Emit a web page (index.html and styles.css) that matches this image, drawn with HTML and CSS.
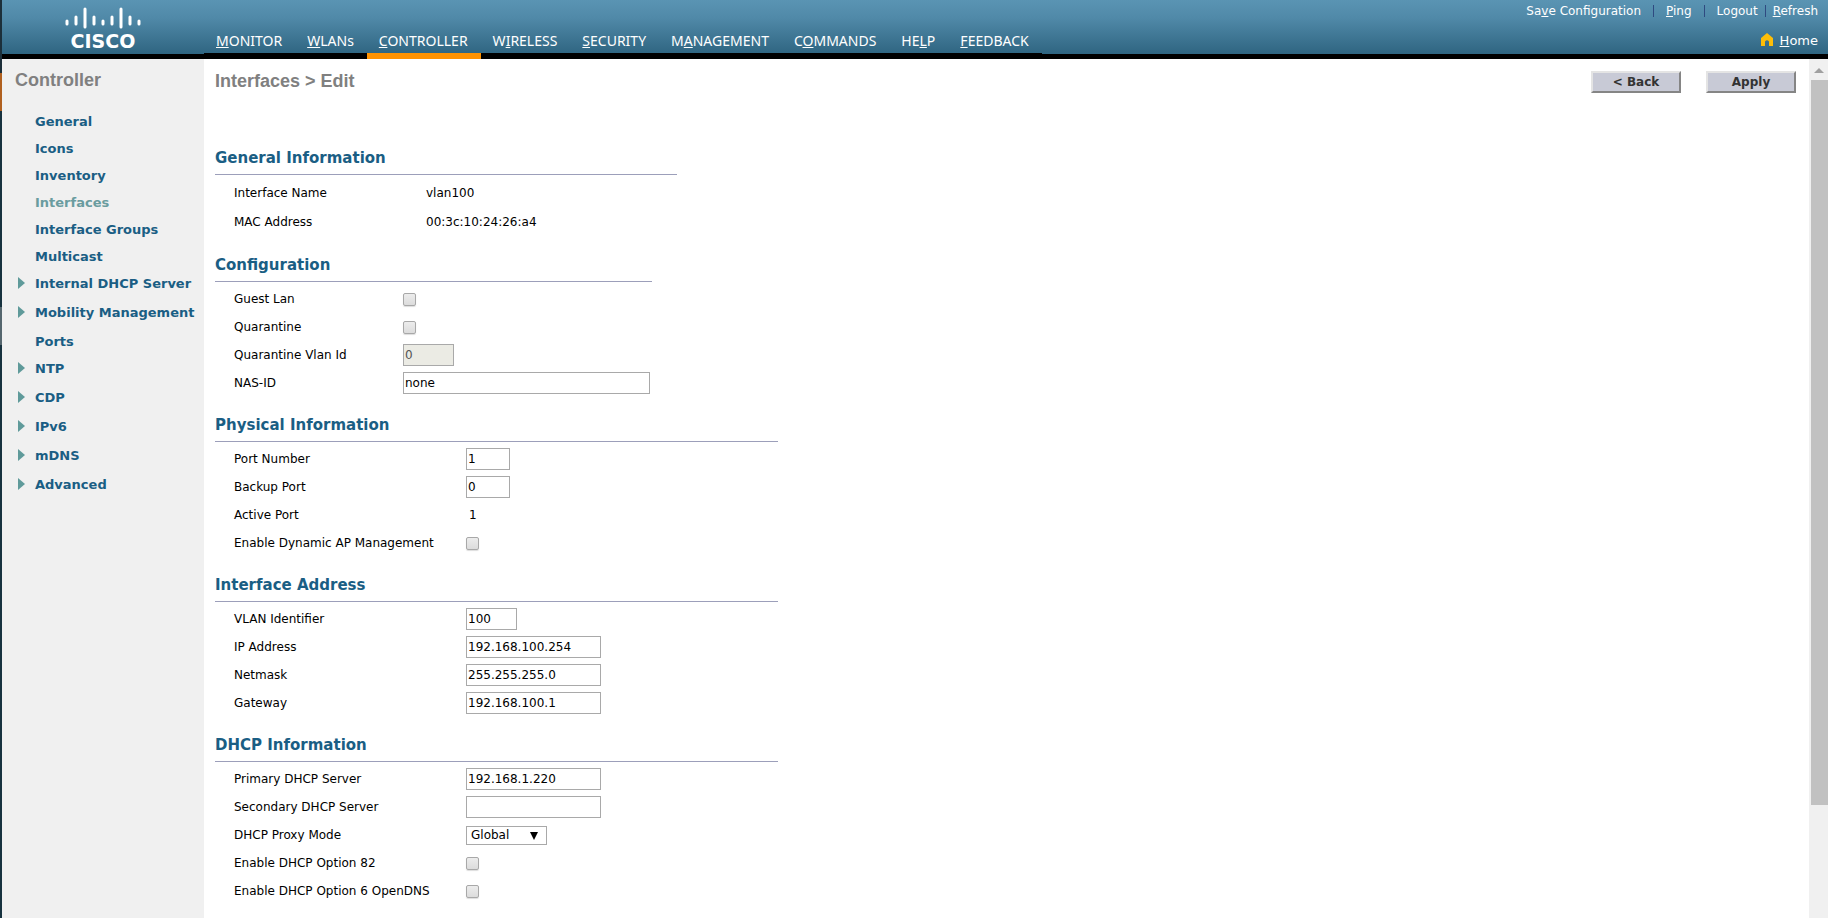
FILE: index.html
```html
<!DOCTYPE html>
<html lang="en">
<head>
    <meta charset="UTF-8">
    <meta name="viewport" content="width=device-width, initial-scale=1.0">
    <title>Interfaces &gt; Edit</title>
    <link rel="stylesheet" href="styles.css">
</head>
<body>
    <div class="edge"></div>
    <div class="app">
        <header class="header">
            <svg class="logo" width="202" height="54" viewBox="0 0 202 54" role="img" aria-label="Cisco">
                <g stroke="#fff" stroke-width="3" stroke-linecap="round">
                    <path d="M65 21v3M74 17v7M83 9v18M92 17v7M101 21v3M110 17v7M119 9v18M128 17v7M137 21v3"/>
                </g>
                <text class="logo-text" x="101" y="48" text-anchor="middle">CISCO</text>
            </svg>
            <nav class="main-nav">
                <a href="#"><u>M</u>ONITOR</a>
                <a href="#"><u>W</u>LANs</a>
                <a href="#" class="active"><u>C</u>ONTROLLER</a>
                <a href="#">W<u>I</u>RELESS</a>
                <a href="#"><u>S</u>ECURITY</a>
                <a href="#">M<u>A</u>NAGEMENT</a>
                <a href="#">C<u>O</u>MMANDS</a>
                <a href="#">HE<u>L</u>P</a>
                <a href="#"><u>F</u>EEDBACK</a>
            </nav>
            <div class="tools">
                <div class="tool-links">
                    <a href="#">Sa<u>v</u>e Configuration</a>
                    <span class="sep"></span>
                    <a href="#"><u>P</u>ing</a>
                    <span class="sep"></span>
                    <a href="#">Logout</a>
                    <span class="sep narrow"></span>
                    <a href="#"><u>R</u>efresh</a>
                </div>
                <a class="home" href="#">
                    <svg width="12" height="13" viewBox="0 0 12 13"><path fill="#fdbe08" d="M6 0 0 5v8h4V8.500q2-2.500 4 0V13h4V5z"/></svg>
                    <span><u>H</u>ome</span>
                </a>
            </div>
        </header>

        <div class="body">
            <aside class="sidebar">
                <h2>Controller</h2>
                <ul class="menu">
                    <li><a href="#">General</a></li>
                    <li><a href="#">Icons</a></li>
                    <li><a href="#">Inventory</a></li>
                    <li><a href="#" class="current">Interfaces</a></li>
                    <li><a href="#">Interface Groups</a></li>
                    <li><a href="#">Multicast</a></li>
                    <li class="group"><a href="#">Internal DHCP Server</a></li>
                    <li class="group"><a href="#">Mobility Management</a></li>
                    <li><a href="#">Ports</a></li>
                    <li class="group"><a href="#">NTP</a></li>
                    <li class="group"><a href="#">CDP</a></li>
                    <li class="group"><a href="#">IPv6</a></li>
                    <li class="group"><a href="#">mDNS</a></li>
                    <li class="group"><a href="#">Advanced</a></li>
                </ul>
            </aside>

            <main class="content">
                <div class="title-bar">
                    <h1>Interfaces &gt; Edit</h1>
                    <div class="actions">
                        <button type="button">&lt; Back</button>
                        <button type="submit" form="edit-form">Apply</button>
                    </div>
                </div>

                <form id="edit-form">
                    <section class="general">
                        <h3>General Information</h3>
                        <dl>
                            <div class="row"><dt>Interface Name</dt><dd>vlan100</dd></div>
                            <div class="row"><dt>MAC Address</dt><dd>00:3c:10:24:26:a4</dd></div>
                        </dl>
                    </section>

                    <section class="config">
                        <h3>Configuration</h3>
                        <div class="row"><label for="guest">Guest Lan</label><input type="checkbox" id="guest"></div>
                        <div class="row"><label for="quarantine">Quarantine</label><input type="checkbox" id="quarantine"></div>
                        <div class="row"><label for="qvlan">Quarantine Vlan Id</label><input type="text" id="qvlan" class="small" value="0" disabled></div>
                        <div class="row"><label for="nasid">NAS-ID</label><input type="text" id="nasid" class="long" value="none"></div>
                    </section>

                    <section>
                        <h3>Physical Information</h3>
                        <div class="row"><label for="port">Port Number</label><input type="text" id="port" class="tiny" value="1"></div>
                        <div class="row"><label for="backup">Backup Port</label><input type="text" id="backup" class="tiny" value="0"></div>
                        <div class="row"><span>Active Port</span><span class="value">1</span></div>
                        <div class="row"><label for="dynap">Enable Dynamic AP Management</label><input type="checkbox" id="dynap"></div>
                    </section>

                    <section>
                        <h3>Interface Address</h3>
                        <div class="row"><label for="vlan">VLAN Identifier</label><input type="text" id="vlan" class="small" value="100"></div>
                        <div class="row"><label for="ip">IP Address</label><input type="text" id="ip" value="192.168.100.254"></div>
                        <div class="row"><label for="netmask">Netmask</label><input type="text" id="netmask" value="255.255.255.0"></div>
                        <div class="row"><label for="gateway">Gateway</label><input type="text" id="gateway" value="192.168.100.1"></div>
                    </section>

                    <section>
                        <h3>DHCP Information</h3>
                        <div class="row"><label for="dhcp1">Primary DHCP Server</label><input type="text" id="dhcp1" value="192.168.1.220"></div>
                        <div class="row"><label for="dhcp2">Secondary DHCP Server</label><input type="text" id="dhcp2"></div>
                        <div class="row">
                            <label for="proxy">DHCP Proxy Mode</label>
                            <div class="select">
                                <select id="proxy">
                                    <option>Global</option>
                                    <option>Enabled</option>
                                    <option>Disabled</option>
                                </select>
                            </div>
                        </div>
                        <div class="row"><label for="opt82">Enable DHCP Option 82</label><input type="checkbox" id="opt82"></div>
                        <div class="row"><label for="opt6">Enable DHCP Option 6 OpenDNS</label><input type="checkbox" id="opt6"></div>
                    </section>
                </form>
            </main>

            <div class="scrollbar">
                <div class="scroll-up"></div>
                <div class="thumb"></div>
            </div>
        </div>
    </div>
</body>
</html>
```
FILE: styles.css
```css
:root {
    --link: #1a5e84;
    --line: #9c9fba;
    --field: #a9a9a9;
    --panel: #f0f0f0;
}

* {
    box-sizing: border-box;
    margin: 0;
    padding: 0;
}

body {
    display: flex;
    height: 100vh;
    overflow: hidden;
    background: #fff;
    color: #000;
    font-family: Verdana, "DejaVu Sans", sans-serif;
    font-size: 12px;
    line-height: 16px;
}

a {
    color: inherit;
    text-decoration: none;
}

/* sliver of the window behind */
.edge {
    width: 2px;
    background: linear-gradient(#1c2f3a 73px, #b0601f 73px 111px, #17323f 111px 307px, #55666e 307px 345px, #17323f 345px);
}

.app {
    flex: 1;
    min-width: 0;
    display: flex;
    flex-direction: column;
}

/* header */
.header {
    display: flex;
    flex-shrink: 0;
    height: 59px;
    color: #fff;
    background: linear-gradient(#5a94b3 0, #5089a8 18px, #2f6581 54px, #000 54px);
}

.logo-text {
    font-family: "DejaVu Sans", sans-serif;
    font-size: 19px;
    font-weight: bold;
    fill: #fff;
}

.main-nav {
    display: flex;
    font-family: "Noto Sans", sans-serif;
    font-size: 14px;
}

.main-nav a {
    height: 59px;
    padding: 33px 13px 0 12px;
    border-bottom: 6px solid #000;
}

.main-nav a.active {
    border-bottom-color: #ff9200;
}

.tools {
    margin-left: auto;
    padding-right: 10px;
    display: flex;
    flex-direction: column;
    align-items: flex-end;
}

.tool-links {
    display: flex;
    align-items: center;
    padding-top: 3px;
}

.sep {
    width: 1px;
    height: 12px;
    margin: 0 12px;
    background: #2f4a80;
}

.sep.narrow {
    margin: 0 7px;
}

.home {
    display: flex;
    align-items: flex-start;
    gap: 7px;
    margin-top: 14px;
    font-size: 13px;
}

/* body */
.body {
    flex: 1;
    min-height: 0;
    display: flex;
}

.sidebar {
    width: 202px;
    flex-shrink: 0;
    background: var(--panel);
}

h1,
h2 {
    color: #808080;
    font-family: Arial, "Liberation Sans", sans-serif;
    font-size: 18px;
    line-height: 20px;
}

.sidebar h2 {
    padding: 11px 13px 0;
}

.menu {
    list-style: none;
    margin-top: 18px;
    color: var(--link);
    font-size: 13px;
    font-weight: bold;
    line-height: 27px;
    white-space: nowrap;
}

.menu li {
    position: relative;
    padding-left: 33px;
}

.menu .group {
    padding-bottom: 2px;
}

.menu .group::before {
    content: "";
    position: absolute;
    left: 16px;
    top: 7px;
    border: 6px solid transparent;
    border-left: 7px solid #5f9a9a;
    border-right: 0;
}

.menu .current {
    color: #6a9c9f;
}

.content {
    flex: 1;
    min-width: 0;
    overflow: hidden;
    padding: 12px 13px 0 11px;
}

.title-bar {
    display: flex;
    justify-content: space-between;
}

.actions {
    display: flex;
    gap: 25px;
}

button {
    width: 90px;
    height: 22px;
    border: 2px solid;
    border-color: #e4e4e4 #858585 #858585 #e4e4e4;
    background: #c8cad6;
    color: #333;
    font: bold 12px Verdana, "DejaVu Sans", sans-serif;
}

form {
    padding-top: 38px;
}

section {
    width: 563px;
    padding-bottom: 1px;
    --label: 251px;
}

section.general {
    width: 462px;
    padding-bottom: 2px;
    --label: 211px;
}

section.config {
    width: 437px;
    --label: 188px;
}

h3 {
    height: 44px;
    padding-top: 17px;
    margin-bottom: 3px;
    border-bottom: 1px solid var(--line);
    color: var(--link);
    font-size: 15px;
    line-height: 20px;
}

.row {
    display: grid;
    grid-template-columns: calc(var(--label) - 19px) auto;
    align-items: center;
    justify-content: start;
    height: 28px;
    padding-left: 19px;
}

.general .row {
    height: 29px;
}

.value {
    padding-left: 3px;
}

input[type="text"] {
    width: 135px;
    height: 22px;
    padding: 0 1px;
    border: 1px solid var(--field);
    background: #fff;
    color: #000;
    font: inherit;
}

input.tiny[type="text"] {
    width: 44px;
}

input.small[type="text"] {
    width: 51px;
}

input.long[type="text"] {
    width: 247px;
}

input[type="text"]:disabled {
    background: #ebebe4;
    color: #545454;
}

input[type="checkbox"] {
    appearance: none;
    width: 13px;
    height: 13px;
    border: 1px solid #a8a8a8;
    border-radius: 2px;
    background: linear-gradient(#ececec, #dcdcdc);
    box-shadow: 0 1px 1px #ddd;
}

.select {
    position: relative;
    width: 81px;
}

.select::after {
    content: "";
    position: absolute;
    right: 9px;
    top: 6px;
    border: 4px solid transparent;
    border-top: 8px solid #000;
    border-bottom: 0;
    pointer-events: none;
}

select {
    display: block;
    appearance: none;
    width: 81px;
    height: 19px;
    padding-left: 4px;
    border: 1px solid var(--field);
    background: #fff;
    color: #000;
    font: inherit;
}

/* scrollbar */
.scrollbar {
    width: 19px;
    padding-left: 2px;
    background: var(--panel);
}

.scroll-up {
    height: 21px;
    padding: 9px 0 0 3px;
}

.scroll-up::before {
    content: "";
    display: block;
    width: 0;
    border: 5px solid transparent;
    border-bottom-color: #a0a0a0;
    border-top: 0;
}

.thumb {
    height: calc(85% - 5px);
    background: #c1c1c1;
}
```
